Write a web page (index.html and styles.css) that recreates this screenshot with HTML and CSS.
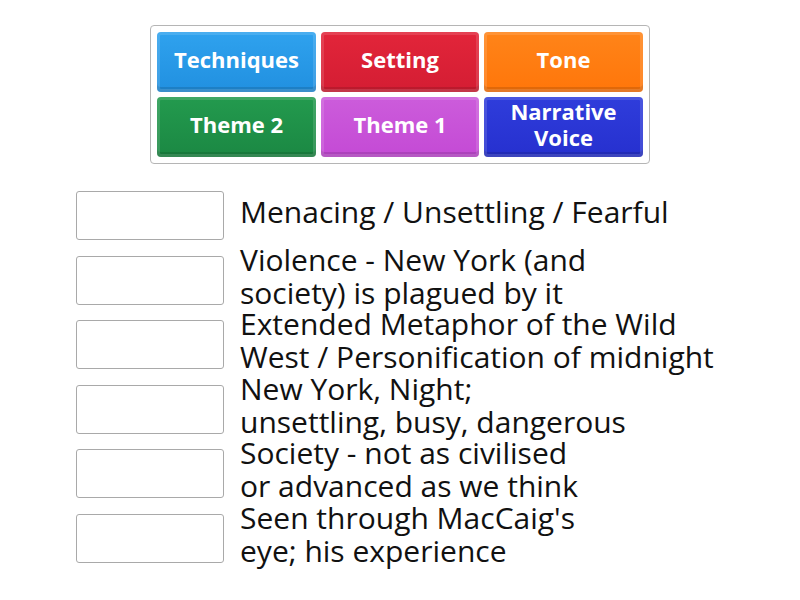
FILE: index.html
```html
<!DOCTYPE html>
<html>

<head>
	<title>Match up</title>
	<link rel="stylesheet" href="styles.css">
</head>

<body>
	<div class="bank">
		<div class="tile blue">Techniques</div>
		<div class="tile red">Setting</div>
		<div class="tile orange">Tone</div>
		<div class="tile green">Theme 2</div>
		<div class="tile purple">Theme 1</div>
		<div class="tile navy">Narrative Voice</div>
	</div>

	<div class="rows">
		<div class="row">
			<div class="slot"></div>
			<div class="text">Menacing / Unsettling / Fearful</div>
		</div>
		<div class="row">
			<div class="slot"></div>
			<div class="text">Violence - New York (and<br>society) is plagued by it</div>
		</div>
		<div class="row">
			<div class="slot"></div>
			<div class="text">Extended Metaphor of the Wild<br>West / Personification of midnight</div>
		</div>
		<div class="row">
			<div class="slot"></div>
			<div class="text">New York, Night;<br>unsettling, busy, dangerous</div>
		</div>
		<div class="row">
			<div class="slot"></div>
			<div class="text">Society - not as civilised<br>or advanced as we think</div>
		</div>
		<div class="row">
			<div class="slot"></div>
			<div class="text">Seen through MacCaig's<br>eye; his experience</div>
		</div>
	</div>
</body>

</html>
```

FILE: styles.css
```css
body {
	margin: 0;
	background: #fff;
	font-family: "Open Sans", sans-serif;
	color: #111;
}

/* блок с карточками */
.bank {
	width: 486px;
	margin: 25px 0 0 150px;
	padding: 6px;
	border: 1px solid #b5b5b5;
	border-radius: 4px;
	display: grid;
	grid-template-columns: 159px 158px 159px;
	grid-auto-rows: 60px;
	column-gap: 5px;
	row-gap: 5px;
}

.tile {
	display: flex;
	align-items: center;
	justify-content: center;
	text-align: center;
	color: #fff;
	font-weight: bold;
	font-size: 22px;
	line-height: 26px;
	border-radius: 4px;
	box-shadow: inset 0 0 0 3px rgba(255, 255, 255, 0.13), inset 0 -5px 0 rgba(0, 0, 0, 0.12);
	padding: 0 8px 7px;
	box-sizing: border-box;
}

.blue {
	background: linear-gradient(#2fa2ee, #2190e0);
}

.red {
	background: linear-gradient(#e2253a, #d41d33);
}

.orange {
	background: linear-gradient(#ff8419, #ff760a);
}

.green {
	background: linear-gradient(#239a4e, #1b8843);
}

.purple {
	background: linear-gradient(#cc5cdb, #c44ad5);
}

.navy {
	background: linear-gradient(#2f3ddb, #2630cf);
}

/* строки с ответами */
.rows {
	margin: 27px 0 0 76px;
}

.row {
	display: flex;
	align-items: center;
	height: 49px;
	margin-bottom: 15.5px;
}

.slot {
	width: 148px;
	height: 49px;
	box-sizing: border-box;
	border: 1px solid #a9a9a9;
	border-radius: 3px;
	flex-shrink: 0;
}

.text {
	margin-left: 16px;
	font-size: 30px;
	line-height: 33px;
	white-space: nowrap;
	margin-top: -9px;
}
```
